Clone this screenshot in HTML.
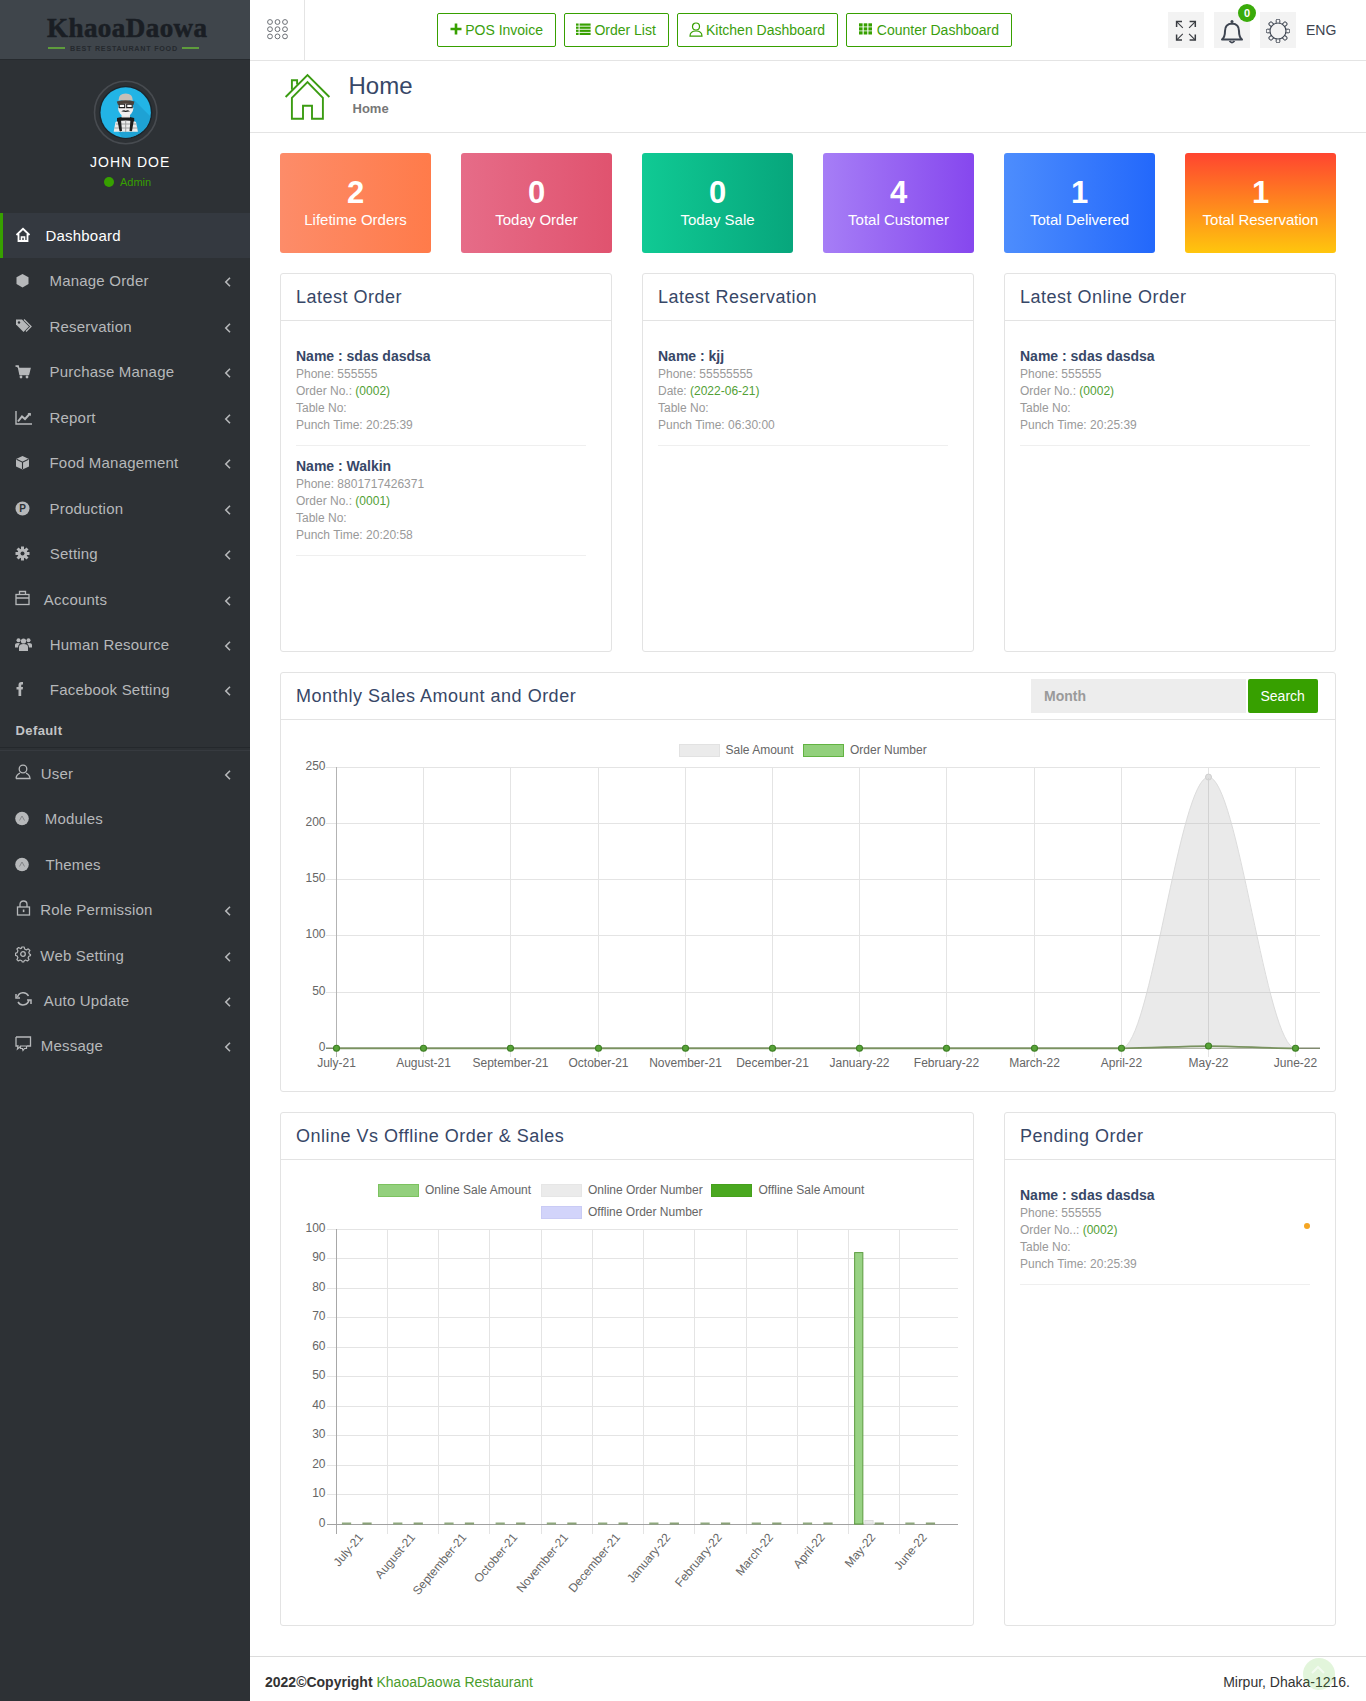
<!DOCTYPE html><html><head><meta charset="utf-8"><style>
*{box-sizing:border-box;margin:0;padding:0}
html,body{width:1366px;height:1701px;overflow:hidden;background:#fff;font-family:"Liberation Sans",sans-serif;color:#374767}
.a{position:absolute;white-space:nowrap}
#side{position:absolute;left:0;top:0;width:250px;height:1701px;background:#2d3135}
.mi{position:absolute;left:0;width:250px;height:45px}
.mt{position:absolute;font-size:15px;line-height:20px;color:#b6b8ba;white-space:nowrap;letter-spacing:0.2px}
.ms{position:absolute}
.btn{position:absolute;top:13px;height:34px;border:1px solid #37a000;border-radius:2px;color:#37a000;font-size:14px;white-space:nowrap}
.ibox{position:absolute;top:12px;width:36px;height:36px;background:#f3f3f3}
.stat{position:absolute;top:153px;width:151px;height:100px;border-radius:3px;color:#fff}
.stat .n{position:absolute;left:0;width:100%;text-align:center;top:22.5px;font-size:31px;line-height:34px;font-weight:bold}
.stat .l{position:absolute;left:0;width:100%;text-align:center;top:57px;font-size:15px;line-height:20px}
.panel{position:absolute;background:#fff;border:1px solid #e3e3e3;border-radius:3px}
.ph{position:absolute;left:0;top:0;right:0;height:47px;border-bottom:1px solid #e3e3e3}
.pt{position:absolute;left:15px;top:13px;font-size:18px;line-height:20px;color:#374767;letter-spacing:0.5px;white-space:nowrap}
.ol{position:absolute;font-size:12px;line-height:17px;color:#999;white-space:nowrap}
.on{position:absolute;font-size:14px;line-height:17px;color:#374767;font-weight:bold;white-space:nowrap}
.g{color:#52a035}
.hr{position:absolute;height:1px;background:#efefef}
.ax{position:absolute;font-size:12px;line-height:14px;color:#666;white-space:nowrap}
</style></head><body>
<div id="side">
<div class="a" style="left:0;top:0;width:250px;height:60px;background:#3f454b;border-bottom:1px solid #262a2e"></div>
<div class="a" style="left:47px;top:13px;font-family:'Liberation Serif',serif;font-weight:bold;font-size:27px;line-height:30px;color:#1a1e24;letter-spacing:0.45px;-webkit-text-stroke:0.6px #1a1e24">KhaoaDaowa</div>
<div class="a" style="left:48px;top:47px;width:17px;height:2px;background:#5e9c3c"></div>
<div class="a" style="left:182px;top:47px;width:17px;height:2px;background:#5e9c3c"></div>
<div class="a" style="left:70px;top:44px;font-size:7.2px;line-height:9px;color:#25292e;font-weight:bold;letter-spacing:0.75px">BEST RESTAURANT FOOD</div>
<svg class="a" style="left:93px;top:80px" width="66" height="66" viewBox="93 80 66 66">
<circle cx="125.7" cy="112.5" r="31.2" fill="#2d3135" stroke="#474b50" stroke-width="1.6"/>
<circle cx="125.7" cy="112.5" r="26.6" fill="#1b252c"/>
<clipPath id="avc"><circle cx="125.7" cy="112.5" r="25.2"/></clipPath>
<g clip-path="url(#avc)">
<rect x="95" y="82" width="62" height="62" fill="#22b4e6"/>
<path d="M134 100 L160 126 L160 150 L130 150 L116 128 Z" fill="#1d9ccd" opacity="0.75"/>
<path d="M113.7 131.8 L115.5 122 L120 120 L131.5 120 L136 122 L137.9 131.8 Z" fill="#ecebea"/>
<path d="M116 124 H136 M114.5 128 H137.5 M120.5 121 V132 M125.7 121 V132 M131 121 V132" stroke="#9a9a9a" stroke-width="0.9"/>
<path d="M117 118 Q125.7 115 134.2 118 L134.2 121.5 Q125.7 119.5 117 121.5 Z" fill="#1a1a1a"/>
<path d="M117.2 119 L119.5 131 L122 131 L121 120Z M134 119 L132 131 L129.5 131 L130.5 120Z" fill="#1e1e1e"/>
<path d="M121.5 113 Q125.7 117.5 130 113 L130 117.5 L121.5 117.5Z" fill="#e9e4e4"/>
<ellipse cx="125.7" cy="108.2" rx="7.6" ry="8.2" fill="#f1eeee"/>
<path d="M119.2 104.2 H124.7 V107.6 H119.2Z M126.7 104.2 H132.2 V107.6 H126.7Z" fill="#fafafa" stroke="#1e1e1e" stroke-width="1.1"/>
<path d="M121.3 111.6 Q123.5 109.6 125.7 110.7 Q128 109.6 130 111.6 Q127.7 111.4 125.7 112 Q123.6 111.4 121.3 111.6Z" fill="#222"/>
<path d="M118.5 100.5 Q118.5 93.5 125.7 93.5 Q132.8 93.5 132.8 100.5Z" fill="#c8bfb8"/>
<path d="M116.8 101.5 Q125.7 99 134.4 101.5 L133.5 105 Q125.7 102.5 118 105 Z" fill="#4a4039"/>
</g>
</svg>
<div class="a" style="left:90px;top:154px;font-size:14px;line-height:16px;color:#fff;letter-spacing:1px">JOHN DOE</div>
<div class="a" style="left:104px;top:177px;width:10px;height:10px;border-radius:50%;background:#37a000"></div>
<div class="a" style="left:120px;top:175px;font-size:11px;line-height:14px;color:#37a000">Admin</div>
<div class="a" style="left:0;top:213px;width:250px;height:45px;background:#343940"></div>
<div class="a" style="left:0;top:213px;width:3px;height:45px;background:#37a000"></div>
<div class="mt" style="left:45.5px;top:225.7px;color:#fff">Dashboard</div>
<svg class="ms" style="left:15px;top:227.0px" width="18" height="17" viewBox="0 0 18 17"><path d="M1.5 8 L8 1.8 L14.5 8" fill="none" stroke="#fff" stroke-width="1.8"/><path d="M3.5 7 V14 H12.5 V7" fill="none" stroke="#fff" stroke-width="1.8"/><path d="M6.5 14 V10 H9.5 V14" fill="none" stroke="#fff" stroke-width="1.6"/></svg>
<div class="mt" style="left:49.5px;top:270.7px;color:#b6b8ba">Manage Order</div>
<svg class="ms" style="left:15px;top:273.0px" width="16" height="17" viewBox="0 0 16 17"><path d="M7.5 1 L13.5 4.3 V11 L7.5 14.5 L1.5 11 V4.3Z" fill="#b6b8ba"/></svg>
<svg class="ms" style="left:224px;top:276.5px" width="8" height="10" viewBox="0 0 8 10"><path d="M6 0.8 L1.8 5 L6 9.2" fill="none" stroke="#b6b8ba" stroke-width="1.6"/></svg>
<div class="mt" style="left:49.5px;top:316.7px;color:#b6b8ba">Reservation</div>
<svg class="ms" style="left:15px;top:318.0px" width="19" height="17" viewBox="0 0 19 17"><path d="M1 1.5 H7 L14 8.5 L8.5 14 L1 6.5Z" fill="#b6b8ba"/><circle cx="4" cy="4.5" r="1.2" fill="#2d3135"/><path d="M9 1.5 L16 8.5 L11 13.5" fill="none" stroke="#b6b8ba" stroke-width="1.3"/></svg>
<svg class="ms" style="left:224px;top:322.5px" width="8" height="10" viewBox="0 0 8 10"><path d="M6 0.8 L1.8 5 L6 9.2" fill="none" stroke="#b6b8ba" stroke-width="1.6"/></svg>
<div class="mt" style="left:49.5px;top:361.7px;color:#b6b8ba">Purchase Manage</div>
<svg class="ms" style="left:15px;top:364.0px" width="18" height="17" viewBox="0 0 18 17"><path d="M0.5 2 H3.2 L5 10.5 H13.5 L15 4.5 H4" fill="#b6b8ba" stroke="#b6b8ba" stroke-width="1.4"/><circle cx="6" cy="13" r="1.4" fill="#b6b8ba"/><circle cx="12" cy="13" r="1.4" fill="#b6b8ba"/></svg>
<svg class="ms" style="left:224px;top:367.5px" width="8" height="10" viewBox="0 0 8 10"><path d="M6 0.8 L1.8 5 L6 9.2" fill="none" stroke="#b6b8ba" stroke-width="1.6"/></svg>
<div class="mt" style="left:49.5px;top:407.7px;color:#b6b8ba">Report</div>
<svg class="ms" style="left:15px;top:410.0px" width="19" height="17" viewBox="0 0 19 17"><path d="M1 1 V14 H17" fill="none" stroke="#b6b8ba" stroke-width="1.4"/><path d="M3 11.5 L7 6.5 L10 9 L15 3.5" fill="none" stroke="#b6b8ba" stroke-width="2"/><path d="M12.5 3 H15.8 V6.3Z" fill="#b6b8ba"/></svg>
<svg class="ms" style="left:224px;top:413.5px" width="8" height="10" viewBox="0 0 8 10"><path d="M6 0.8 L1.8 5 L6 9.2" fill="none" stroke="#b6b8ba" stroke-width="1.6"/></svg>
<div class="mt" style="left:49.5px;top:452.7px;color:#b6b8ba">Food Management</div>
<svg class="ms" style="left:15px;top:455.0px" width="17" height="17" viewBox="0 0 17 17"><path d="M7.5 1 L14 4 V11.5 L7.5 14.5 L1 11.5 V4Z" fill="#b6b8ba"/><path d="M1.5 4.3 L7.5 7.2 L13.5 4.3 M7.5 7.2 V14" fill="none" stroke="#2d3135" stroke-width="1.1"/></svg>
<svg class="ms" style="left:224px;top:458.5px" width="8" height="10" viewBox="0 0 8 10"><path d="M6 0.8 L1.8 5 L6 9.2" fill="none" stroke="#b6b8ba" stroke-width="1.6"/></svg>
<div class="mt" style="left:49.5px;top:498.7px;color:#b6b8ba">Production</div>
<svg class="ms" style="left:15px;top:501.0px" width="17" height="17" viewBox="0 0 17 17"><circle cx="7.5" cy="7.5" r="7" fill="#b6b8ba"/><text x="7.6" y="11.3" font-family="Liberation Sans" font-weight="bold" font-size="10" text-anchor="middle" fill="#2d3135">P</text></svg>
<svg class="ms" style="left:224px;top:504.5px" width="8" height="10" viewBox="0 0 8 10"><path d="M6 0.8 L1.8 5 L6 9.2" fill="none" stroke="#b6b8ba" stroke-width="1.6"/></svg>
<div class="mt" style="left:49.8px;top:543.7px;color:#b6b8ba">Setting</div>
<svg class="ms" style="left:15px;top:546.0px" width="17" height="17" viewBox="0 0 17 17"><g fill="#b6b8ba"><circle cx="7.5" cy="7.5" r="4.8"/><rect x="6" y="0.5" width="3" height="14"/><rect x="0.5" y="6" width="14" height="3"/><rect x="6" y="0.5" width="3" height="14" transform="rotate(45 7.5 7.5)"/><rect x="6" y="0.5" width="3" height="14" transform="rotate(-45 7.5 7.5)"/></g><circle cx="7.5" cy="7.5" r="2" fill="#2d3135"/></svg>
<svg class="ms" style="left:224px;top:549.5px" width="8" height="10" viewBox="0 0 8 10"><path d="M6 0.8 L1.8 5 L6 9.2" fill="none" stroke="#b6b8ba" stroke-width="1.6"/></svg>
<div class="mt" style="left:43.8px;top:589.7px;color:#b6b8ba">Accounts</div>
<svg class="ms" style="left:15px;top:590.0px" width="17" height="18" viewBox="0 0 17 18"><rect x="1" y="4.5" width="13" height="10" fill="none" stroke="#b6b8ba" stroke-width="1.3"/><path d="M4.5 4.5 V1.5 H10.5 V4.5 M1 8 H14" fill="none" stroke="#b6b8ba" stroke-width="1.3"/></svg>
<svg class="ms" style="left:224px;top:595.5px" width="8" height="10" viewBox="0 0 8 10"><path d="M6 0.8 L1.8 5 L6 9.2" fill="none" stroke="#b6b8ba" stroke-width="1.6"/></svg>
<div class="mt" style="left:49.8px;top:634.7px;color:#b6b8ba">Human Resource</div>
<svg class="ms" style="left:15px;top:637.0px" width="19" height="17" viewBox="0 0 19 17"><g fill="#b6b8ba"><circle cx="8.5" cy="4" r="2.6"/><circle cx="3.5" cy="3.2" r="2"/><circle cx="13.5" cy="3.2" r="2"/><path d="M4 14 V10 Q4 7 8.5 7 Q13 7 13 10 V14Z"/><path d="M0 10.5 V8 Q0 6 3 6 Q4.5 6 5 6.5 Q3 8 3 10.5Z"/><path d="M17 10.5 V8 Q17 6 14 6 Q12.5 6 12 6.5 Q14 8 14 10.5Z"/></g></svg>
<svg class="ms" style="left:224px;top:640.5px" width="8" height="10" viewBox="0 0 8 10"><path d="M6 0.8 L1.8 5 L6 9.2" fill="none" stroke="#b6b8ba" stroke-width="1.6"/></svg>
<div class="mt" style="left:49.8px;top:679.7px;color:#b6b8ba">Facebook Setting</div>
<svg class="ms" style="left:14px;top:681.0px" width="12" height="17" viewBox="0 0 12 17"><path d="M4.5 15 V8.5 H2.5 V6 H4.5 V4 Q4.5 1 7.5 1 H9 V3.5 H8 Q7.2 3.5 7.2 4.5 V6 H9 L8.7 8.5 H7.2 V15Z" fill="#b6b8ba"/></svg>
<svg class="ms" style="left:224px;top:685.5px" width="8" height="10" viewBox="0 0 8 10"><path d="M6 0.8 L1.8 5 L6 9.2" fill="none" stroke="#b6b8ba" stroke-width="1.6"/></svg>
<div class="mt" style="left:40.8px;top:763.7px;color:#b6b8ba">User</div>
<svg class="ms" style="left:15px;top:764.0px" width="18" height="18" viewBox="0 0 18 18"><circle cx="8" cy="5" r="3.8" fill="none" stroke="#b6b8ba" stroke-width="1.3"/><path d="M1 14.5 Q1.5 10.5 5 9.2 M11 9.2 Q14.5 10.5 15 14.5 H1" fill="none" stroke="#b6b8ba" stroke-width="1.3"/></svg>
<svg class="ms" style="left:224px;top:769.5px" width="8" height="10" viewBox="0 0 8 10"><path d="M6 0.8 L1.8 5 L6 9.2" fill="none" stroke="#b6b8ba" stroke-width="1.6"/></svg>
<div class="mt" style="left:44.8px;top:808.7px;color:#b6b8ba">Modules</div>
<svg class="ms" style="left:15px;top:811.0px" width="16" height="17" viewBox="0 0 16 17"><circle cx="7" cy="7.5" r="6.8" fill="#b6b8ba"/><path d="M4.5 9.5 L7 5 L9.5 9.5" fill="none" stroke="#7d7f82" stroke-width="0.9"/></svg>
<div class="mt" style="left:45.4px;top:854.7px;color:#b6b8ba">Themes</div>
<svg class="ms" style="left:15px;top:857.0px" width="16" height="17" viewBox="0 0 16 17"><circle cx="7" cy="7.5" r="6.8" fill="#b6b8ba"/><path d="M4.5 9.5 L7 5 L9.5 9.5" fill="none" stroke="#7d7f82" stroke-width="0.9"/></svg>
<div class="mt" style="left:40.3px;top:899.7px;color:#b6b8ba">Role Permission</div>
<svg class="ms" style="left:16px;top:900.0px" width="17" height="18" viewBox="0 0 17 18"><rect x="1.5" y="7" width="12" height="8" fill="none" stroke="#b6b8ba" stroke-width="1.3"/><path d="M4 7 V4.5 Q4 1 7.5 1 Q11 1 11 4.5 V7" fill="none" stroke="#b6b8ba" stroke-width="1.3"/><rect x="6.8" y="9.5" width="1.6" height="2.6" fill="#b6b8ba"/></svg>
<svg class="ms" style="left:224px;top:905.5px" width="8" height="10" viewBox="0 0 8 10"><path d="M6 0.8 L1.8 5 L6 9.2" fill="none" stroke="#b6b8ba" stroke-width="1.6"/></svg>
<div class="mt" style="left:40.3px;top:945.7px;color:#b6b8ba">Web Setting</div>
<svg class="ms" style="left:15px;top:945.5px" width="18" height="18" viewBox="0 0 18 18"><circle cx="8" cy="8" r="2.3" fill="none" stroke="#b6b8ba" stroke-width="1.3"/><path d="M6.8 1 H9.2 L9.6 3 L11.4 3.9 L13.2 2.8 L14.9 4.5 L13.8 6.3 L14.4 8 L15.5 8.6 V9.6 L13.8 10.2 L13.1 12 L14 13.6 L12.4 15 L10.6 14 L9.2 14.7 L8.7 16 H7.3 L6.8 14.7 L5 14 L3.4 15 L1.9 13.5 L2.9 11.8 L2.2 10 L0.5 9.4 V7.2 L2.2 6.6 L2.9 4.8 L1.9 3 L3.6 1.5 L5.4 2.6 L6.5 2.1Z" fill="none" stroke="#b6b8ba" stroke-width="1.2" stroke-linejoin="round"/></svg>
<svg class="ms" style="left:224px;top:951.5px" width="8" height="10" viewBox="0 0 8 10"><path d="M6 0.8 L1.8 5 L6 9.2" fill="none" stroke="#b6b8ba" stroke-width="1.6"/></svg>
<div class="mt" style="left:43.8px;top:990.7px;color:#b6b8ba">Auto Update</div>
<svg class="ms" style="left:15px;top:990.5px" width="19" height="17" viewBox="0 0 19 17"><path d="M2.5 6 A6 6 0 0 1 13.5 5" fill="none" stroke="#b6b8ba" stroke-width="1.5"/><path d="M14 9 A6 6 0 0 1 3 11" fill="none" stroke="#b6b8ba" stroke-width="1.5"/><path d="M1 3 V7 H5" fill="none" stroke="#b6b8ba" stroke-width="1.5"/><path d="M16 13 V9 H12" fill="none" stroke="#b6b8ba" stroke-width="1.5"/></svg>
<svg class="ms" style="left:224px;top:996.5px" width="8" height="10" viewBox="0 0 8 10"><path d="M6 0.8 L1.8 5 L6 9.2" fill="none" stroke="#b6b8ba" stroke-width="1.6"/></svg>
<div class="mt" style="left:40.8px;top:1035.7px;color:#b6b8ba">Message</div>
<svg class="ms" style="left:15px;top:1036.0px" width="18" height="17" viewBox="0 0 18 17"><path d="M1 1 H15.5 V10 H12 M1 1 V10 H3 L2.5 13 L5.5 10.5" fill="none" stroke="#b6b8ba" stroke-width="1.3"/><path d="M5.5 10 H11.5 V12.5 H9.5 L8 14.5 L7.5 12.5 H5.5Z" fill="none" stroke="#b6b8ba" stroke-width="1.2"/></svg>
<svg class="ms" style="left:224px;top:1041.5px" width="8" height="10" viewBox="0 0 8 10"><path d="M6 0.8 L1.8 5 L6 9.2" fill="none" stroke="#b6b8ba" stroke-width="1.6"/></svg>
<div class="a" style="left:15.5px;top:723px;font-size:13px;line-height:16px;font-weight:bold;color:#c3c4c6;letter-spacing:0.4px">Default</div>
<div class="a" style="left:0;top:747px;width:250px;height:1px;background:#24282c"></div>
<div class="a" style="left:0;top:750px;width:250px;height:1px;background:#363a3f"></div>
</div>
<div class="a" style="left:250px;top:0;width:1116px;height:61px;background:#fff;border-bottom:1px solid #e4e4e4"></div>
<div class="a" style="left:304px;top:0;width:1px;height:60px;background:#e4e4e4"></div>
<svg class="a" style="left:265.5px;top:17.5px" width="23" height="23" viewBox="0 0 23 23"><circle cx="4.0" cy="4.0" r="2.4" fill="none" stroke="#6b6f75" stroke-width="1"/><circle cx="4.0" cy="11.2" r="2.4" fill="none" stroke="#6b6f75" stroke-width="1"/><circle cx="4.0" cy="18.4" r="2.4" fill="none" stroke="#6b6f75" stroke-width="1"/><circle cx="11.5" cy="4.0" r="2.4" fill="none" stroke="#6b6f75" stroke-width="1"/><circle cx="11.5" cy="11.2" r="2.4" fill="none" stroke="#6b6f75" stroke-width="1"/><circle cx="11.5" cy="18.4" r="2.4" fill="none" stroke="#6b6f75" stroke-width="1"/><circle cx="19.0" cy="4.0" r="2.4" fill="none" stroke="#6b6f75" stroke-width="1"/><circle cx="19.0" cy="11.2" r="2.4" fill="none" stroke="#6b6f75" stroke-width="1"/><circle cx="19.0" cy="18.4" r="2.4" fill="none" stroke="#6b6f75" stroke-width="1"/></svg>
<div class="btn" style="left:437px;width:119px"></div>
<svg class="a" style="left:449.5px;top:23px" width="12" height="12" viewBox="0 0 12 12"><path d="M6 0.5 V11.5 M0.5 6 H11.5" stroke="#37a000" stroke-width="2.6"/></svg>
<div class="a" style="left:465.2px;top:22px;font-size:14px;line-height:17px;color:#3a9e0c">POS Invoice</div>
<div class="btn" style="left:564px;width:105px"></div>
<svg class="a" style="left:576px;top:23px" width="15" height="12" viewBox="0 0 15 12"><g fill="#37a000"><rect x="0" y="0.5" width="2.6" height="2.2"/><rect x="0" y="3.6" width="2.6" height="2.2"/><rect x="0" y="6.7" width="2.6" height="2.2"/><rect x="0" y="9.8" width="2.6" height="2.2"/><rect x="3.6" y="0.5" width="11" height="2.2"/><rect x="3.6" y="3.6" width="11" height="2.2"/><rect x="3.6" y="6.7" width="11" height="2.2"/><rect x="3.6" y="9.8" width="11" height="2.2"/></g></svg>
<div class="a" style="left:594.4px;top:22px;font-size:14px;line-height:17px;color:#3a9e0c">Order List</div>
<div class="btn" style="left:677px;width:161px"></div>
<svg class="a" style="left:689px;top:22px" width="14" height="15" viewBox="0 0 14 15"><circle cx="7" cy="4.5" r="3.5" fill="none" stroke="#37a000" stroke-width="1.2"/><path d="M1 14.2 Q1 9 7 9 Q13 9 13 14.2Z" fill="none" stroke="#37a000" stroke-width="1.2"/></svg>
<div class="a" style="left:706.0px;top:22px;font-size:14px;line-height:17px;color:#3a9e0c">Kitchen Dashboard</div>
<div class="btn" style="left:846px;width:166px"></div>
<svg class="a" style="left:859px;top:23px" width="14" height="12" viewBox="0 0 14 12"><g fill="#37a000"><rect x="0.0" y="0.3" width="3.6" height="3.2"/><rect x="0.0" y="4.3" width="3.6" height="3.2"/><rect x="0.0" y="8.3" width="3.6" height="3.2"/><rect x="4.7" y="0.3" width="3.6" height="3.2"/><rect x="4.7" y="4.3" width="3.6" height="3.2"/><rect x="4.7" y="8.3" width="3.6" height="3.2"/><rect x="9.4" y="0.3" width="3.6" height="3.2"/><rect x="9.4" y="4.3" width="3.6" height="3.2"/><rect x="9.4" y="8.3" width="3.6" height="3.2"/></g></svg>
<div class="a" style="left:876.8px;top:22px;font-size:14px;line-height:17px;color:#3a9e0c">Counter Dashboard</div>
<div class="ibox" style="left:1168px"></div>
<div class="ibox" style="left:1214px"></div>
<div class="ibox" style="left:1260px"></div>
<svg class="a" style="left:1170px;top:15px" width="32" height="32" viewBox="1170 15 32 32"><g fill="none" stroke="#3a3d42" stroke-linecap="butt"><path d="M1176.6 27 V21.6 H1182" stroke-width="1.5"/><path d="M1176.8 21.8 L1182.8 27.8" stroke-width="1.1"/><path d="M1189.6 21.6 H1195.3 V27" stroke-width="1.5"/><path d="M1195.1 21.8 L1189.1 27.8" stroke-width="1.1"/><path d="M1176.6 34.6 V40.1 H1182" stroke-width="1.5"/><path d="M1176.8 39.9 L1182.8 33.9" stroke-width="1.1"/><path d="M1189.6 40.1 H1195.3 V34.6" stroke-width="1.5"/><path d="M1195.1 39.9 L1189.1 33.9" stroke-width="1.1"/></g></svg>
<svg class="a" style="left:1219px;top:17px" width="26" height="28" viewBox="0 0 26 28"><path d="M3 22.5 Q6 20 6 14 Q6 7 13 6.5 Q20 7 20 14 Q20 20 23 22.5Z" fill="none" stroke="#3d4450" stroke-width="2" stroke-linejoin="round"/><circle cx="13" cy="4.5" r="1.5" fill="#3d4450"/><path d="M10.5 24 Q13 27 15.5 24" fill="none" stroke="#3d4450" stroke-width="1.8"/></svg>
<svg class="a" style="left:1266px;top:19px" width="24" height="24" viewBox="0 0 24 24"><rect x="10.2" y="0.3" width="3.6" height="4.6" rx="1.1" transform="rotate(0 12 12)" fill="#f3f3f3" stroke="#3d4450" stroke-width="1"/><rect x="10.2" y="0.3" width="3.6" height="4.6" rx="1.1" transform="rotate(45 12 12)" fill="#f3f3f3" stroke="#3d4450" stroke-width="1"/><rect x="10.2" y="0.3" width="3.6" height="4.6" rx="1.1" transform="rotate(90 12 12)" fill="#f3f3f3" stroke="#3d4450" stroke-width="1"/><rect x="10.2" y="0.3" width="3.6" height="4.6" rx="1.1" transform="rotate(135 12 12)" fill="#f3f3f3" stroke="#3d4450" stroke-width="1"/><rect x="10.2" y="0.3" width="3.6" height="4.6" rx="1.1" transform="rotate(180 12 12)" fill="#f3f3f3" stroke="#3d4450" stroke-width="1"/><rect x="10.2" y="0.3" width="3.6" height="4.6" rx="1.1" transform="rotate(225 12 12)" fill="#f3f3f3" stroke="#3d4450" stroke-width="1"/><rect x="10.2" y="0.3" width="3.6" height="4.6" rx="1.1" transform="rotate(270 12 12)" fill="#f3f3f3" stroke="#3d4450" stroke-width="1"/><rect x="10.2" y="0.3" width="3.6" height="4.6" rx="1.1" transform="rotate(315 12 12)" fill="#f3f3f3" stroke="#3d4450" stroke-width="1"/><circle cx="12" cy="12" r="8" fill="#f3f3f3" stroke="#3d4450" stroke-width="1.15"/></svg>
<div class="a" style="left:1238px;top:4px;width:18px;height:18px;border-radius:50%;background:#3aab0a;color:#fff;font-size:11px;font-weight:bold;line-height:18px;text-align:center">0</div>
<div class="a" style="left:1306px;top:22px;font-size:14px;line-height:16px;color:#3d4450">ENG</div>
<div class="a" style="left:250px;top:132px;width:1116px;height:1px;background:#e4e4e4"></div>
<svg class="a" style="left:283px;top:72px" width="50" height="50" viewBox="283 72 50 50"><g fill="none" stroke="#3b9c12" stroke-width="1.9" stroke-linejoin="miter"><path d="M285.6 97 L307.5 75 L329.4 97"/><path d="M291.9 118.7 V97.8 L307.5 82.2 L322.9 97.8 V118.7 H312 V105.8 H303 V118.7 Z"/><path d="M291.9 89.8 V80.3 H297.1 V84.6"/></g></svg>
<div class="a" style="left:348.5px;top:72px;font-size:24px;line-height:28px;color:#374767">Home</div>
<div class="a" style="left:352.5px;top:101px;font-size:13px;line-height:16px;font-weight:bold;color:#777">Home</div>
<div class="stat" style="left:280px;background:linear-gradient(to right,#fd8c69,#ff7b4a)"><div class="n">2</div><div class="l">Lifetime Orders</div></div>
<div class="stat" style="left:461px;background:linear-gradient(to right,#e66c88,#e0536f)"><div class="n">0</div><div class="l">Today Order</div></div>
<div class="stat" style="left:642px;background:linear-gradient(to right,#10ca94,#07a67c)"><div class="n">0</div><div class="l">Today Sale</div></div>
<div class="stat" style="left:823px;background:linear-gradient(to right,#a67ef6,#8647ee)"><div class="n">4</div><div class="l">Total Customer</div></div>
<div class="stat" style="left:1004px;background:linear-gradient(to right,#4d8dfd,#2368fb)"><div class="n">1</div><div class="l">Total Delivered</div></div>
<div class="stat" style="left:1185px;background:linear-gradient(to bottom,#ff4530,#ffc60d)"><div class="n">1</div><div class="l">Total Reservation</div></div>
<div class="panel" style="left:280px;top:273px;width:332px;height:379px"><div class="ph"></div><div class="pt">Latest Order</div></div>
<div class="on" style="left:296px;top:347.7px">Name : sdas dasdsa</div>
<div class="ol" style="left:296px;top:365.8px">Phone: 555555</div>
<div class="ol" style="left:296px;top:382.8px">Order No.: <span class="g">(0002)</span></div>
<div class="ol" style="left:296px;top:399.8px">Table No:</div>
<div class="ol" style="left:296px;top:416.8px">Punch Time: 20:25:39</div>
<div class="hr" style="left:296px;top:445px;width:290px"></div>
<div class="on" style="left:296px;top:457.7px">Name : Walkin</div>
<div class="ol" style="left:296px;top:475.8px">Phone: 8801717426371</div>
<div class="ol" style="left:296px;top:492.8px">Order No.: <span class="g">(0001)</span></div>
<div class="ol" style="left:296px;top:509.8px">Table No:</div>
<div class="ol" style="left:296px;top:526.8px">Punch Time: 20:20:58</div>
<div class="hr" style="left:296px;top:555px;width:290px"></div>
<div class="panel" style="left:642px;top:273px;width:332px;height:379px"><div class="ph"></div><div class="pt">Latest Reservation</div></div>
<div class="on" style="left:658px;top:347.7px">Name : kjj</div>
<div class="ol" style="left:658px;top:365.8px">Phone: 55555555</div>
<div class="ol" style="left:658px;top:382.8px">Date: <span class="g">(2022-06-21)</span></div>
<div class="ol" style="left:658px;top:399.8px">Table No:</div>
<div class="ol" style="left:658px;top:416.8px">Punch Time: 06:30:00</div>
<div class="hr" style="left:658px;top:445px;width:290px"></div>
<div class="panel" style="left:1004px;top:273px;width:332px;height:379px"><div class="ph"></div><div class="pt">Latest Online Order</div></div>
<div class="on" style="left:1020px;top:347.7px">Name : sdas dasdsa</div>
<div class="ol" style="left:1020px;top:365.8px">Phone: 555555</div>
<div class="ol" style="left:1020px;top:382.8px">Order No.: <span class="g">(0002)</span></div>
<div class="ol" style="left:1020px;top:399.8px">Table No:</div>
<div class="ol" style="left:1020px;top:416.8px">Punch Time: 20:25:39</div>
<div class="hr" style="left:1020px;top:445px;width:290px"></div>
<div class="panel" style="left:280px;top:672px;width:1056px;height:420px"><div class="ph"></div><div class="pt">Monthly Sales Amount and Order</div></div>
<div class="a" style="left:1031px;top:679px;width:215px;height:34px;background:#ededed"></div>
<div class="a" style="left:1044px;top:688px;font-size:14px;line-height:16px;font-weight:bold;color:#9a9a9a">Month</div>
<div class="a" style="left:1248px;top:679px;width:70px;height:34px;background:#37a000;border-radius:2px"></div>
<div class="a" style="left:1260.5px;top:688px;font-size:14px;line-height:16px;color:#fff">Search</div>
<div class="a" style="left:679px;top:744px;width:41px;height:13px;background:#ebebeb;border:1px solid #e2e2e2"></div>
<div class="ax" style="left:725.5px;top:742.5px">Sale Amount</div>
<div class="a" style="left:803px;top:744px;width:41px;height:13px;background:#92d07c;border:1.5px solid #62b342"></div>
<div class="ax" style="left:850px;top:742.5px">Order Number</div>
<div class="panel" style="left:280px;top:1112px;width:694px;height:514px"><div class="ph"></div><div class="pt">Online Vs Offline Order &amp; Sales</div></div>
<svg class="a" style="left:0;top:0" width="1366" height="1701" viewBox="0 0 1366 1701">
<path d="M326 767.5 H1320" stroke="#e4e4e4" stroke-width="1"/>
<path d="M326 823.5 H1320" stroke="#e4e4e4" stroke-width="1"/>
<path d="M326 879.5 H1320" stroke="#e4e4e4" stroke-width="1"/>
<path d="M326 935.5 H1320" stroke="#e4e4e4" stroke-width="1"/>
<path d="M326 992.5 H1320" stroke="#e4e4e4" stroke-width="1"/>
<path d="M326 1048.3 H1320" stroke="#80896f" stroke-width="1.5"/>
<path d="M336.5 767 V1057" stroke="#b3b3b3" stroke-width="1"/>
<path d="M423.5 767 V1057" stroke="#e4e4e4" stroke-width="1"/>
<path d="M510.5 767 V1057" stroke="#e4e4e4" stroke-width="1"/>
<path d="M598.5 767 V1057" stroke="#e4e4e4" stroke-width="1"/>
<path d="M685.5 767 V1057" stroke="#e4e4e4" stroke-width="1"/>
<path d="M772.5 767 V1057" stroke="#e4e4e4" stroke-width="1"/>
<path d="M859.5 767 V1057" stroke="#e4e4e4" stroke-width="1"/>
<path d="M946.5 767 V1057" stroke="#e4e4e4" stroke-width="1"/>
<path d="M1034.5 767 V1057" stroke="#e4e4e4" stroke-width="1"/>
<path d="M1121.5 767 V1057" stroke="#e4e4e4" stroke-width="1"/>
<path d="M1208.5 767 V1057" stroke="#e4e4e4" stroke-width="1"/>
<path d="M1295.5 767 V1057" stroke="#e4e4e4" stroke-width="1"/>
<path d="M336.50 1048.30 C365.50 1048.30 394.50 1048.30 423.50 1048.30 C452.50 1048.30 481.50 1048.30 510.50 1048.30 C539.83 1048.30 569.17 1048.30 598.50 1048.30 C627.50 1048.30 656.50 1048.30 685.50 1048.30 C714.50 1048.30 743.50 1048.30 772.50 1048.30 C801.50 1048.30 830.50 1048.30 859.50 1048.30 C888.50 1048.30 917.50 1048.30 946.50 1048.30 C975.83 1048.30 1005.17 1048.30 1034.50 1048.30 C1063.50 1048.30 1092.50 1048.30 1121.50 1048.30 C1150.50 1048.30 1179.50 777.05 1208.50 777.05 C1237.50 777.05 1266.50 1048.30 1295.50 1048.30 L1295.50 1048.50 L336.50 1048.50 Z" fill="#e9e9e9" fill-opacity="0.95"/>
<path d="M336.50 1048.30 C365.50 1048.30 394.50 1048.30 423.50 1048.30 C452.50 1048.30 481.50 1048.30 510.50 1048.30 C539.83 1048.30 569.17 1048.30 598.50 1048.30 C627.50 1048.30 656.50 1048.30 685.50 1048.30 C714.50 1048.30 743.50 1048.30 772.50 1048.30 C801.50 1048.30 830.50 1048.30 859.50 1048.30 C888.50 1048.30 917.50 1048.30 946.50 1048.30 C975.83 1048.30 1005.17 1048.30 1034.50 1048.30 C1063.50 1048.30 1092.50 1048.30 1121.50 1048.30 C1150.50 1048.30 1179.50 777.05 1208.50 777.05 C1237.50 777.05 1266.50 1048.30 1295.50 1048.30" fill="none" stroke="#dcdcdc" stroke-width="1"/>
<circle cx="1208.50" cy="777.05" r="3" fill="#dedede" stroke="#cfcfcf" stroke-width="1"/>
<path d="M1208.5 778 V1048" stroke="#d2d2d2" stroke-width="1"/>
<path d="M1121.5 823.5 H1295" stroke="#d6d6d6" stroke-width="1"/>
<path d="M1121.5 879.5 H1295" stroke="#d6d6d6" stroke-width="1"/>
<path d="M1121.5 935.5 H1295" stroke="#d6d6d6" stroke-width="1"/>
<path d="M1121.5 992.5 H1295" stroke="#d6d6d6" stroke-width="1"/>
<path d="M336.50 1048.30 C365.50 1048.30 394.50 1048.30 423.50 1048.30 C452.50 1048.30 481.50 1048.30 510.50 1048.30 C539.83 1048.30 569.17 1048.30 598.50 1048.30 C627.50 1048.30 656.50 1048.30 685.50 1048.30 C714.50 1048.30 743.50 1048.30 772.50 1048.30 C801.50 1048.30 830.50 1048.30 859.50 1048.30 C888.50 1048.30 917.50 1048.30 946.50 1048.30 C975.83 1048.30 1005.17 1048.30 1034.50 1048.30 C1063.50 1048.30 1092.50 1048.30 1121.50 1048.30 C1150.50 1048.30 1179.50 1046.05 1208.50 1046.05 C1237.50 1046.05 1266.50 1048.30 1295.50 1048.30" fill="none" stroke="#79925f" stroke-width="1.7"/>
<circle cx="336.50" cy="1048.30" r="3" fill="#58a338" stroke="#3d7f24" stroke-width="1.1"/>
<circle cx="423.50" cy="1048.30" r="3" fill="#58a338" stroke="#3d7f24" stroke-width="1.1"/>
<circle cx="510.50" cy="1048.30" r="3" fill="#58a338" stroke="#3d7f24" stroke-width="1.1"/>
<circle cx="598.50" cy="1048.30" r="3" fill="#58a338" stroke="#3d7f24" stroke-width="1.1"/>
<circle cx="685.50" cy="1048.30" r="3" fill="#58a338" stroke="#3d7f24" stroke-width="1.1"/>
<circle cx="772.50" cy="1048.30" r="3" fill="#58a338" stroke="#3d7f24" stroke-width="1.1"/>
<circle cx="859.50" cy="1048.30" r="3" fill="#58a338" stroke="#3d7f24" stroke-width="1.1"/>
<circle cx="946.50" cy="1048.30" r="3" fill="#58a338" stroke="#3d7f24" stroke-width="1.1"/>
<circle cx="1034.50" cy="1048.30" r="3" fill="#58a338" stroke="#3d7f24" stroke-width="1.1"/>
<circle cx="1121.50" cy="1048.30" r="3" fill="#58a338" stroke="#3d7f24" stroke-width="1.1"/>
<circle cx="1208.50" cy="1046.05" r="3" fill="#58a338" stroke="#3d7f24" stroke-width="1.1"/>
<circle cx="1295.50" cy="1048.30" r="3" fill="#58a338" stroke="#3d7f24" stroke-width="1.1"/>
<path d="M327 1229.5 H958" stroke="#e4e4e4" stroke-width="1"/>
<path d="M327 1258.5 H958" stroke="#e4e4e4" stroke-width="1"/>
<path d="M327 1288.5 H958" stroke="#e4e4e4" stroke-width="1"/>
<path d="M327 1317.5 H958" stroke="#e4e4e4" stroke-width="1"/>
<path d="M327 1347.5 H958" stroke="#e4e4e4" stroke-width="1"/>
<path d="M327 1376.5 H958" stroke="#e4e4e4" stroke-width="1"/>
<path d="M327 1406.5 H958" stroke="#e4e4e4" stroke-width="1"/>
<path d="M327 1435.5 H958" stroke="#e4e4e4" stroke-width="1"/>
<path d="M327 1465.5 H958" stroke="#e4e4e4" stroke-width="1"/>
<path d="M327 1494.5 H958" stroke="#e4e4e4" stroke-width="1"/>
<path d="M327 1524.5 H958" stroke="#e4e4e4" stroke-width="1"/>
<path d="M336.5 1229 V1534" stroke="#a8a8a8" stroke-width="1"/>
<path d="M387.5 1229 V1534" stroke="#e4e4e4" stroke-width="1"/>
<path d="M438.5 1229 V1534" stroke="#e4e4e4" stroke-width="1"/>
<path d="M489.5 1229 V1534" stroke="#e4e4e4" stroke-width="1"/>
<path d="M541.5 1229 V1534" stroke="#e4e4e4" stroke-width="1"/>
<path d="M592.5 1229 V1534" stroke="#e4e4e4" stroke-width="1"/>
<path d="M643.5 1229 V1534" stroke="#e4e4e4" stroke-width="1"/>
<path d="M694.5 1229 V1534" stroke="#e4e4e4" stroke-width="1"/>
<path d="M746.5 1229 V1534" stroke="#e4e4e4" stroke-width="1"/>
<path d="M797.5 1229 V1534" stroke="#e4e4e4" stroke-width="1"/>
<path d="M848.5 1229 V1534" stroke="#e4e4e4" stroke-width="1"/>
<path d="M899.5 1229 V1534" stroke="#e4e4e4" stroke-width="1"/>
<path d="M327 1524.5 H958" stroke="#a2a2a2" stroke-width="1"/>
<rect x="341.93" y="1522.5" width="9.22" height="2" fill="#7d9a69" opacity="0.85"/>
<rect x="362.42" y="1522.5" width="9.22" height="2" fill="#76925f" opacity="0.85"/>
<rect x="393.15" y="1522.5" width="9.22" height="2" fill="#7d9a69" opacity="0.85"/>
<rect x="413.64" y="1522.5" width="9.22" height="2" fill="#76925f" opacity="0.85"/>
<rect x="444.37" y="1522.5" width="9.22" height="2" fill="#7d9a69" opacity="0.85"/>
<rect x="464.86" y="1522.5" width="9.22" height="2" fill="#76925f" opacity="0.85"/>
<rect x="495.59" y="1522.5" width="9.22" height="2" fill="#7d9a69" opacity="0.85"/>
<rect x="516.08" y="1522.5" width="9.22" height="2" fill="#76925f" opacity="0.85"/>
<rect x="546.81" y="1522.5" width="9.22" height="2" fill="#7d9a69" opacity="0.85"/>
<rect x="567.30" y="1522.5" width="9.22" height="2" fill="#76925f" opacity="0.85"/>
<rect x="598.03" y="1522.5" width="9.22" height="2" fill="#7d9a69" opacity="0.85"/>
<rect x="618.52" y="1522.5" width="9.22" height="2" fill="#76925f" opacity="0.85"/>
<rect x="649.25" y="1522.5" width="9.22" height="2" fill="#7d9a69" opacity="0.85"/>
<rect x="669.74" y="1522.5" width="9.22" height="2" fill="#76925f" opacity="0.85"/>
<rect x="700.47" y="1522.5" width="9.22" height="2" fill="#7d9a69" opacity="0.85"/>
<rect x="720.96" y="1522.5" width="9.22" height="2" fill="#76925f" opacity="0.85"/>
<rect x="751.69" y="1522.5" width="9.22" height="2" fill="#7d9a69" opacity="0.85"/>
<rect x="772.18" y="1522.5" width="9.22" height="2" fill="#76925f" opacity="0.85"/>
<rect x="802.91" y="1522.5" width="9.22" height="2" fill="#7d9a69" opacity="0.85"/>
<rect x="823.40" y="1522.5" width="9.22" height="2" fill="#76925f" opacity="0.85"/>
<rect x="854.13" y="1522.5" width="9.22" height="2" fill="#7d9a69" opacity="0.85"/>
<rect x="874.62" y="1522.5" width="9.22" height="2" fill="#76925f" opacity="0.85"/>
<rect x="905.35" y="1522.5" width="9.22" height="2" fill="#7d9a69" opacity="0.85"/>
<rect x="925.84" y="1522.5" width="9.22" height="2" fill="#76925f" opacity="0.85"/>
<rect x="854.63" y="1252.60" width="8.22" height="271.40" fill="#98d284" stroke="#5d9c40" stroke-width="1"/>
<rect x="864.88" y="1520.50" width="8.22" height="3.50" fill="#eaeaea" stroke="#dcdcdc" stroke-width="1"/>
</svg>
<div class="ax" style="right:1040.5px;top:758.5px;text-align:right">250</div>
<div class="ax" style="right:1040.5px;top:814.5px;text-align:right">200</div>
<div class="ax" style="right:1040.5px;top:870.5px;text-align:right">150</div>
<div class="ax" style="right:1040.5px;top:926.5px;text-align:right">100</div>
<div class="ax" style="right:1040.5px;top:983.5px;text-align:right">50</div>
<div class="ax" style="right:1040.5px;top:1039.5px;text-align:right">0</div>
<div class="ax" style="left:276.5px;top:1055.5px;width:120px;text-align:center">July-21</div>
<div class="ax" style="left:363.5px;top:1055.5px;width:120px;text-align:center">August-21</div>
<div class="ax" style="left:450.5px;top:1055.5px;width:120px;text-align:center">September-21</div>
<div class="ax" style="left:538.5px;top:1055.5px;width:120px;text-align:center">October-21</div>
<div class="ax" style="left:625.5px;top:1055.5px;width:120px;text-align:center">November-21</div>
<div class="ax" style="left:712.5px;top:1055.5px;width:120px;text-align:center">December-21</div>
<div class="ax" style="left:799.5px;top:1055.5px;width:120px;text-align:center">January-22</div>
<div class="ax" style="left:886.5px;top:1055.5px;width:120px;text-align:center">February-22</div>
<div class="ax" style="left:974.5px;top:1055.5px;width:120px;text-align:center">March-22</div>
<div class="ax" style="left:1061.5px;top:1055.5px;width:120px;text-align:center">April-22</div>
<div class="ax" style="left:1148.5px;top:1055.5px;width:120px;text-align:center">May-22</div>
<div class="ax" style="left:1235.5px;top:1055.5px;width:120px;text-align:center">June-22</div>
<div class="a" style="left:378px;top:1184px;width:41px;height:13px;background:#93d07d;border:1px solid #7cc25f"></div>
<div class="ax" style="left:425.0px;top:1182.5px">Online Sale Amount</div>
<div class="a" style="left:541px;top:1184px;width:41px;height:13px;background:#ebebeb;border:1px solid #e6e6e6"></div>
<div class="ax" style="left:588.0px;top:1182.5px">Online Order Number</div>
<div class="a" style="left:711px;top:1184px;width:41px;height:13px;background:#4aa820;border:1px solid #46a01c"></div>
<div class="ax" style="left:758.5px;top:1182.5px">Offline Sale Amount</div>
<div class="a" style="left:541px;top:1206px;width:41px;height:13px;background:#d2d4fa;border:1px solid #c9cbf5"></div>
<div class="ax" style="left:588.0px;top:1204.5px">Offline Order Number</div>
<div class="ax" style="right:1040.5px;top:1220.5px;text-align:right">100</div>
<div class="ax" style="right:1040.5px;top:1250.0px;text-align:right">90</div>
<div class="ax" style="right:1040.5px;top:1279.5px;text-align:right">80</div>
<div class="ax" style="right:1040.5px;top:1309.0px;text-align:right">70</div>
<div class="ax" style="right:1040.5px;top:1338.5px;text-align:right">60</div>
<div class="ax" style="right:1040.5px;top:1368.0px;text-align:right">50</div>
<div class="ax" style="right:1040.5px;top:1397.5px;text-align:right">40</div>
<div class="ax" style="right:1040.5px;top:1427.0px;text-align:right">30</div>
<div class="ax" style="right:1040.5px;top:1456.5px;text-align:right">20</div>
<div class="ax" style="right:1040.5px;top:1486.0px;text-align:right">10</div>
<div class="ax" style="right:1040.5px;top:1515.5px;text-align:right">0</div>
<div class="ax" style="right:1004.9px;top:1528.0px;transform-origin:100% 50%;transform:rotate(-50deg)">July-21</div>
<div class="ax" style="right:953.7px;top:1528.0px;transform-origin:100% 50%;transform:rotate(-50deg)">August-21</div>
<div class="ax" style="right:902.4px;top:1528.0px;transform-origin:100% 50%;transform:rotate(-50deg)">September-21</div>
<div class="ax" style="right:851.2px;top:1528.0px;transform-origin:100% 50%;transform:rotate(-50deg)">October-21</div>
<div class="ax" style="right:800.0px;top:1528.0px;transform-origin:100% 50%;transform:rotate(-50deg)">November-21</div>
<div class="ax" style="right:748.8px;top:1528.0px;transform-origin:100% 50%;transform:rotate(-50deg)">December-21</div>
<div class="ax" style="right:697.6px;top:1528.0px;transform-origin:100% 50%;transform:rotate(-50deg)">January-22</div>
<div class="ax" style="right:646.4px;top:1528.0px;transform-origin:100% 50%;transform:rotate(-50deg)">February-22</div>
<div class="ax" style="right:595.1px;top:1528.0px;transform-origin:100% 50%;transform:rotate(-50deg)">March-22</div>
<div class="ax" style="right:543.9px;top:1528.0px;transform-origin:100% 50%;transform:rotate(-50deg)">April-22</div>
<div class="ax" style="right:492.7px;top:1528.0px;transform-origin:100% 50%;transform:rotate(-50deg)">May-22</div>
<div class="ax" style="right:441.5px;top:1528.0px;transform-origin:100% 50%;transform:rotate(-50deg)">June-22</div>
<div class="panel" style="left:1004px;top:1112px;width:332px;height:514px"><div class="ph"></div><div class="pt">Pending Order</div></div>
<div class="on" style="left:1020px;top:1187.2px">Name : sdas dasdsa</div>
<div class="ol" style="left:1020px;top:1205.3px">Phone: 555555</div>
<div class="ol" style="left:1020px;top:1222.3px">Order No..: <span class="g">(0002)</span></div>
<div class="ol" style="left:1020px;top:1239.3px">Table No:</div>
<div class="ol" style="left:1020px;top:1256.3px">Punch Time: 20:25:39</div>
<div class="hr" style="left:1020px;top:1284px;width:290px"></div>
<div class="a" style="left:1304px;top:1223px;width:6px;height:6px;border-radius:50%;background:#f5a623"></div>
<div class="a" style="left:250px;top:1656px;width:1116px;height:1px;background:#dcdcdc"></div>
<div class="a" style="left:265px;top:1674px;font-size:14px;line-height:16px;color:#333"><b>2022©Copyright</b> <span style="color:#4a9c2c">KhaoaDaowa Restaurant</span></div>
<div class="a" style="right:16px;top:1674px;font-size:14px;line-height:16px;color:#333">Mirpur, Dhaka-1216.</div>
<div class="a" style="left:1302.5px;top:1658px;width:32px;height:32px;border-radius:50%;background:#48c020;opacity:0.16"></div>
<svg class="a" style="left:1310px;top:1664px" width="16" height="12" viewBox="0 0 16 12"><path d="M2 9 L8 3 L14 9" fill="none" stroke="#fff" stroke-width="2" opacity="0.6"/></svg>
</body></html>
